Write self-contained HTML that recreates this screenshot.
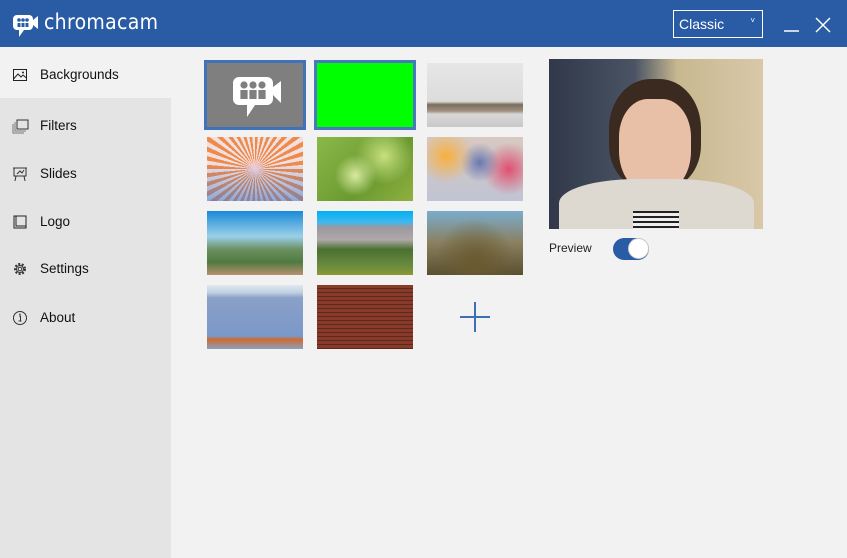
<!DOCTYPE html>
<html><head><meta charset="utf-8"><style>
*{margin:0;padding:0;box-sizing:border-box}
body{width:847px;height:558px;background:#f2f2f2;font-family:"Liberation Sans",sans-serif;position:relative;overflow:hidden}
.hdr{position:absolute;left:0;top:0;width:847px;height:47px;background:#2a5ba5}
.logo{position:absolute;left:44px;top:10px;color:#fff;font-size:21px;letter-spacing:0.3px;font-family:"DejaVu Sans Condensed","Liberation Sans",sans-serif}
.side{position:absolute;left:0;top:98px;width:171px;height:460px;background:#e4e4e4}
.item{position:absolute;left:0;width:171px;font-size:13.5px;color:#111}
.item span{position:absolute;left:40px}
.item svg{position:absolute;left:12px}
.t{position:absolute;width:96px;height:64px}
.sel{position:absolute;width:102px;height:70px;border:3px solid #3f72b8}
.sel2{position:absolute;width:102px;height:70px;border:3px solid #4a78c0}
.dd{position:absolute;left:673px;top:10px;width:90px;height:28px;border:1px solid #fff;color:#fff;font-size:14px;padding:5px 0 0 5px}
</style></head><body>
<div class="hdr">
<svg style="position:absolute;left:12px;top:13px" width="28" height="26" viewBox="0 0 28 26"><rect x="1" y="2" width="20" height="15" rx="4" fill="#fff"/><path d="M7 16 L7 24 L12 17Z" fill="#fff"/><path d="M21 7 L26 3 L26 16 L21 12Z" fill="#fff"/><circle cx="7" cy="7" r="1.8" fill="#2a5ba5"/><circle cx="11" cy="7" r="1.8" fill="#2a5ba5"/><circle cx="15" cy="7" r="1.8" fill="#2a5ba5"/><rect x="5.5" y="10" width="3" height="4" fill="#2a5ba5"/><rect x="9.5" y="10" width="3" height="4" fill="#2a5ba5"/><rect x="13.5" y="10" width="3" height="4" fill="#2a5ba5"/></svg>
<div class="logo">chromacam</div>
<div class="dd">Classic<span style="position:absolute;right:7px;top:5px;font-size:8px">˅</span></div>
<div style="position:absolute;left:784px;top:30px;width:15px;height:1.5px;background:#c8d4ea"></div>
<svg style="position:absolute;left:815px;top:17px" width="16" height="16"><path d="M1 1L15 15M15 1L1 15" stroke="#fff" stroke-width="1.5"/></svg>
</div>
<div class="side"></div>
<div class="item" style="top:67px"><svg width="16" height="16" viewBox="0 0 16 16"><rect x="1.5" y="2.5" width="13" height="11" fill="none" stroke="#222"/><path d="M1.5 12 L6 7 L9 10 L11 8 L14.5 11" fill="none" stroke="#222"/><circle cx="11" cy="5.5" r="1" fill="#222"/></svg><span>Backgrounds</span></div>
<div class="item" style="top:118px"><svg width="18" height="16" viewBox="0 0 18 16"><rect x="5" y="2" width="11" height="9" fill="none" stroke="#333"/><path d="M3 4v9h11M1 6v9h11" fill="none" stroke="#777"/></svg><span>Filters</span></div>
<div class="item" style="top:166px"><svg width="16" height="16" viewBox="0 0 16 16"><rect x="2" y="2" width="12" height="8" fill="none" stroke="#333"/><path d="M1 2h14M4 10l-1 5M12 10l1 5M5 8l3-3 2 2 2-3" fill="none" stroke="#333"/></svg><span>Slides</span></div>
<div class="item" style="top:214px"><svg width="16" height="16" viewBox="0 0 16 16"><rect x="2" y="2" width="12" height="12" fill="none" stroke="#222"/><path d="M4 2v10h10" fill="none" stroke="#222"/></svg><span>Logo</span></div>
<div class="item" style="top:261px"><svg width="16" height="16" viewBox="0 0 16 16"><circle cx="8" cy="8" r="5" fill="none" stroke="#333" stroke-width="2" stroke-dasharray="2 1.6"/><circle cx="8" cy="8" r="3.5" fill="none" stroke="#333"/><circle cx="8" cy="8" r="1.8" fill="none" stroke="#333"/></svg><span>Settings</span></div>
<div class="item" style="top:310px"><svg width="16" height="16" viewBox="0 0 16 16"><circle cx="8" cy="8" r="6.5" fill="none" stroke="#333"/><path d="M7 6h1.5v5M6.5 11h3" fill="none" stroke="#333"/><circle cx="8" cy="4.3" r=".8" fill="#333"/></svg><span>About</span></div>

<div class="sel" style="left:204px;top:60px"></div>
<div class="t" style="left:207px;top:63px;background:#7f7f7f"><svg style="position:absolute;left:24px;top:12px" width="56" height="42" viewBox="0 0 28 21"><rect x="1" y="1" width="20" height="14" rx="3" fill="#fff"/><path d="M8 14 L8 21 L12 15Z" fill="#fff"/><path d="M21 6 L25 3 L25 14 L21 10Z" fill="#fff"/><circle cx="6.5" cy="5" r="1.8" fill="#7f7f7f"/><circle cx="11" cy="5" r="1.8" fill="#7f7f7f"/><circle cx="15.5" cy="5" r="1.8" fill="#7f7f7f"/><rect x="4.7" y="7.5" width="3.6" height="4.5" fill="#7f7f7f"/><rect x="9.2" y="7.5" width="3.6" height="4.5" fill="#7f7f7f"/><rect x="13.7" y="7.5" width="3.6" height="4.5" fill="#7f7f7f"/></svg></div>
<div class="sel2" style="left:314px;top:60px"></div>
<div class="t" style="left:317px;top:63px;background:#00ff00"></div>
<div class="t" style="left:427px;top:63px;background:linear-gradient(#e6e6e6 0%,#dcdcdc 60%,#7a6e5e 65%,#a09080 75%,#d8d8d8 80%,#c8c8c8)"></div>
<div class="t" style="left:207px;top:137px;background:radial-gradient(circle at 50% 50%,#f4d6e6 0,transparent 20%),repeating-conic-gradient(from 0deg at 50% 50%,#f08a4a 0 5deg,#f0e0e0 5deg 10deg),linear-gradient(#f8a060,#3d78c8)"><div style="position:absolute;inset:0;background:linear-gradient(transparent 40%,rgba(60,120,210,.55))"></div></div>
<div class="t" style="left:317px;top:137px;background:radial-gradient(circle at 40% 60%,#d8eaa0,transparent 30%),radial-gradient(circle at 70% 30%,#c8e080,transparent 35%),linear-gradient(135deg,#8cb848,#6a9a30 60%,#90b040)"></div>
<div class="t" style="left:427px;top:137px;background:radial-gradient(circle at 20% 30%,#f8b040,transparent 30%),radial-gradient(circle at 55% 40%,#6a78b0,transparent 30%),radial-gradient(circle at 85% 50%,#e05070,transparent 30%),linear-gradient(#d8c8c0,#c0c4d4)"></div>
<div class="t" style="left:207px;top:211px;background:linear-gradient(#1a8ad8 0%,#9ad0e8 40%,#6a9060 60%,#507a40 80%,#b89070)"></div>
<div class="t" style="left:317px;top:211px;background:linear-gradient(#00b0f0 0%,#40b8f0 18%,#9a98a0 25%,#b0a8a8 45%,#4a7030 60%,#6a8a40 85%,#8a9a30)"></div>
<div class="t" style="left:427px;top:211px;background:radial-gradient(ellipse at 50% 80%,#6a5a30,transparent 60%),linear-gradient(#7aaccc,#8a8060 50%,#5a5030)"></div>
<div class="t" style="left:207px;top:285px;background:linear-gradient(#e0e8f0 0,#c0d0e0 12%,#8aa0c8 20%,#7a98c8 80%,#d06a30 85%,#8aa0c0)"></div>
<div class="t" style="left:317px;top:285px;background:repeating-linear-gradient(#8a3a28 0 3px,#5a2a20 3px 4px),#7a3020"></div>
<svg style="position:absolute;left:459px;top:301px" width="32" height="32"><path d="M16 1V31M1 16H31" stroke="#3f6fb3" stroke-width="2"/></svg>

<div style="position:absolute;left:549px;top:59px;width:214px;height:170px;background:linear-gradient(90deg,#30384a 0%,#4a5464 40%,#c8b890 60%,#d8c8a8 100%);overflow:hidden">
<div style="position:absolute;left:60px;top:20px;width:92px;height:110px;border-radius:45% 45% 40% 40%;background:#3a2a20"></div>
<div style="position:absolute;left:70px;top:40px;width:72px;height:95px;border-radius:40% 40% 45% 45%;background:#e8c0a8"></div>
<div style="position:absolute;left:10px;top:120px;width:195px;height:60px;border-radius:40% 40% 0 0;background:#ddd8d0"></div>
<div style="position:absolute;left:84px;top:152px;width:46px;height:20px;background:repeating-linear-gradient(#222 0 2px,#eee 2px 5px)"></div>
</div>
<div style="position:absolute;left:549px;top:241px;font-size:12px;color:#222">Preview</div>
<div style="position:absolute;left:613px;top:238px;width:36px;height:22px;border-radius:11px;background:#2a5ba5"></div>
<div style="position:absolute;left:628px;top:238px;width:21px;height:21px;border-radius:50%;background:#fff;border:1px solid #ccc"></div>
</body></html>
